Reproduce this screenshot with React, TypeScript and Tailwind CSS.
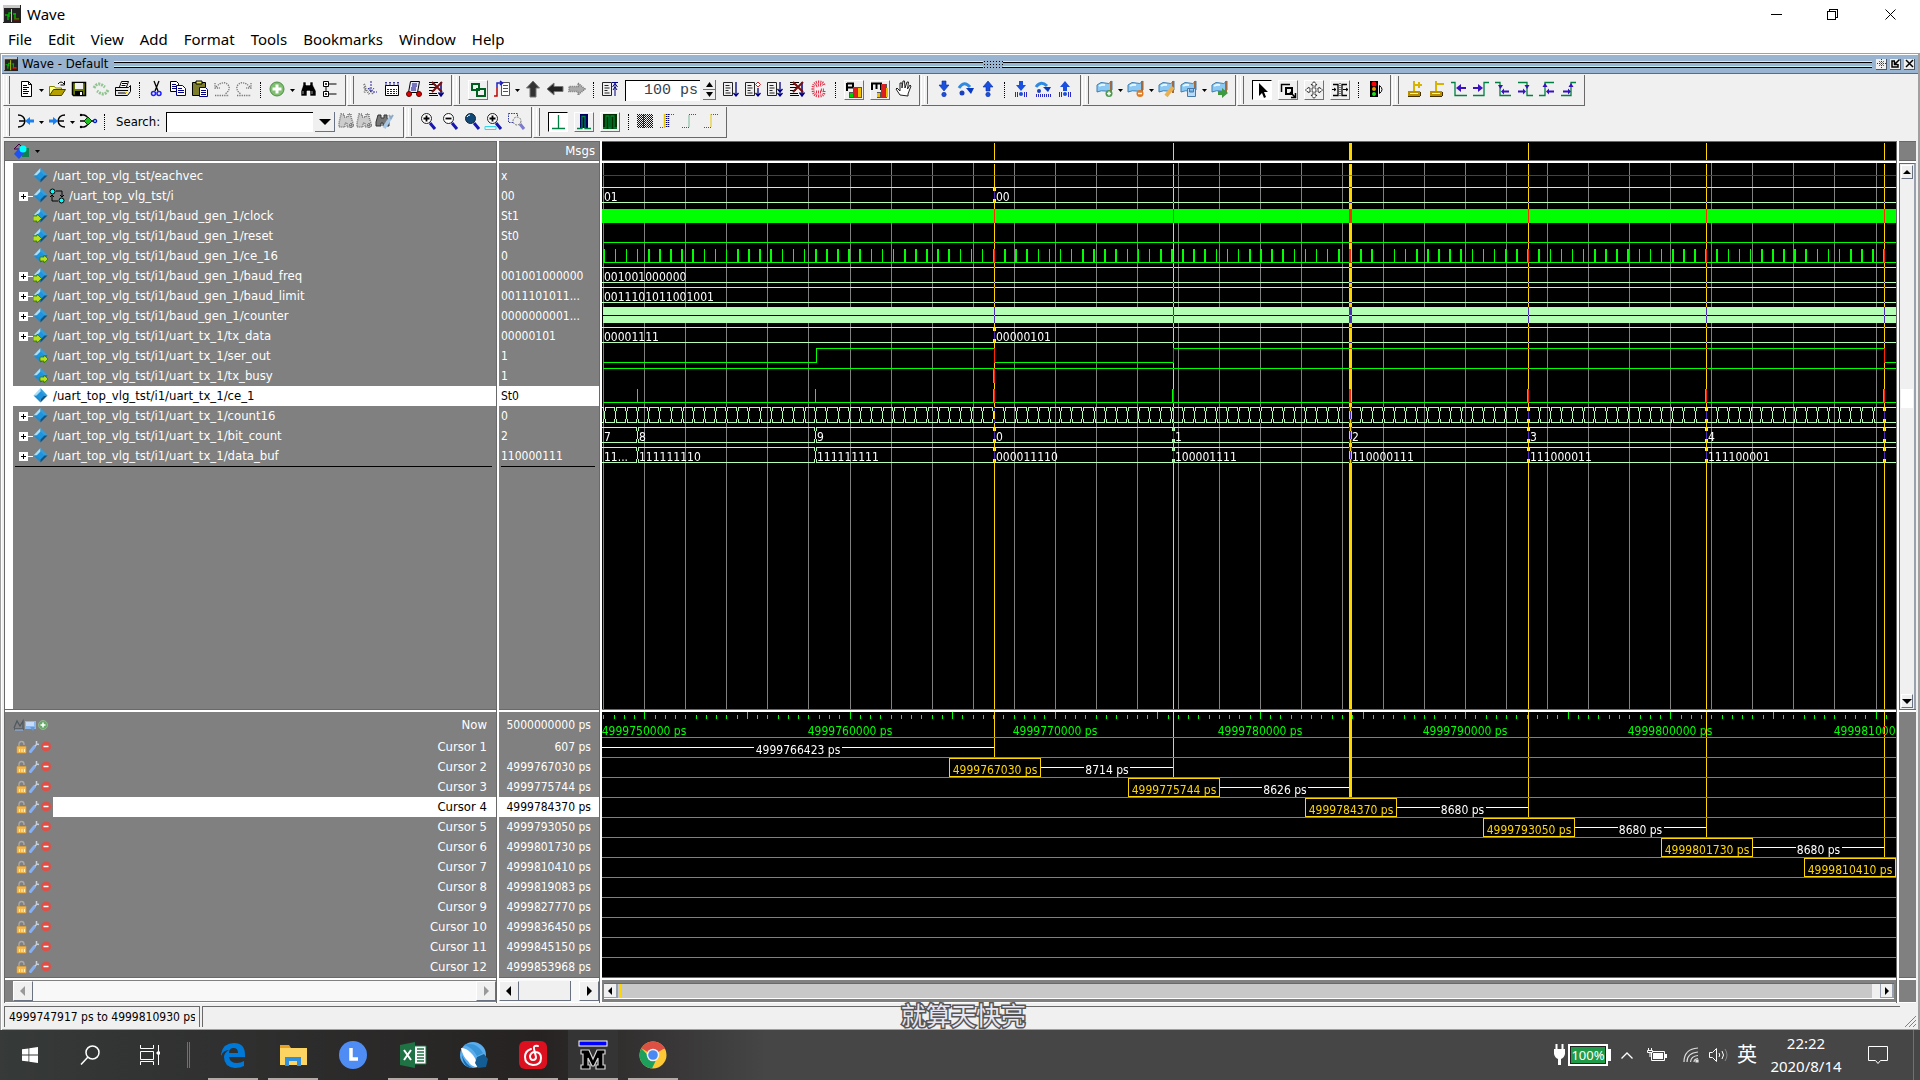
import type { ReactNode } from 'react';
import clsx from 'clsx';

type SignalKind = 'signal' | 'in' | 'out';

interface Signal {
    name: string;
    value: string;
    kind: SignalKind;
    expandable?: boolean;
    variable?: boolean;
    selected?: boolean;
}

interface Cursor {
    name: string;
    value: string;
    selected?: boolean;
}

const SIGNALS: Signal[] = [
    { name: '/uart_top_vlg_tst/eachvec', value: 'x', kind: 'signal' },
    { name: '/uart_top_vlg_tst/i', value: '00', kind: 'signal', expandable: true, variable: true },
    { name: '/uart_top_vlg_tst/i1/baud_gen_1/clock', value: 'St1', kind: 'in' },
    { name: '/uart_top_vlg_tst/i1/baud_gen_1/reset', value: 'St0', kind: 'in' },
    { name: '/uart_top_vlg_tst/i1/baud_gen_1/ce_16', value: '0', kind: 'out' },
    { name: '/uart_top_vlg_tst/i1/baud_gen_1/baud_freq', value: '001001000000', kind: 'in', expandable: true },
    { name: '/uart_top_vlg_tst/i1/baud_gen_1/baud_limit', value: '0011101011...', kind: 'in', expandable: true },
    { name: '/uart_top_vlg_tst/i1/baud_gen_1/counter', value: '0000000001...', kind: 'signal', expandable: true },
    { name: '/uart_top_vlg_tst/i1/uart_tx_1/tx_data', value: '00000101', kind: 'in', expandable: true },
    { name: '/uart_top_vlg_tst/i1/uart_tx_1/ser_out', value: '1', kind: 'out' },
    { name: '/uart_top_vlg_tst/i1/uart_tx_1/tx_busy', value: '1', kind: 'out' },
    { name: '/uart_top_vlg_tst/i1/uart_tx_1/ce_1', value: 'St0', kind: 'signal', selected: true },
    { name: '/uart_top_vlg_tst/i1/uart_tx_1/count16', value: '0', kind: 'signal', expandable: true },
    { name: '/uart_top_vlg_tst/i1/uart_tx_1/bit_count', value: '2', kind: 'signal', expandable: true },
    { name: '/uart_top_vlg_tst/i1/uart_tx_1/data_buf', value: '110000111', kind: 'signal', expandable: true },
];

const CURSORS: Cursor[] = [
    { name: 'Cursor 1', value: '607 ps' },
    { name: 'Cursor 2', value: '4999767030 ps' },
    { name: 'Cursor 3', value: '4999775744 ps' },
    { name: 'Cursor 4', value: '4999784370 ps', selected: true },
    { name: 'Cursor 5', value: '4999793050 ps' },
    { name: 'Cursor 6', value: '4999801730 ps' },
    { name: 'Cursor 7', value: '4999810410 ps' },
    { name: 'Cursor 8', value: '4999819083 ps' },
    { name: 'Cursor 9', value: '4999827770 ps' },
    { name: 'Cursor 10', value: '4999836450 ps' },
    { name: 'Cursor 11', value: '4999845150 ps' },
    { name: 'Cursor 12', value: '4999853968 ps' },
];

/* ---------- time axis ---------- */

const GREEN = '#00ff00';
const PALE = '#b3ffb3';
const GOLD = '#ffd700';

// Time is in ps after 4999750000.
const toX = (t: number) => Math.round(42.3 + t * 0.02052);

const MARKS = [
    { x: toX(17030), label: '4999767030 ps', next: '8714 ps' },
    { x: toX(25744), label: '4999775744 ps', next: '8626 ps' },
    { x: toX(34370), label: '4999784370 ps', next: '8680 ps' },
    { x: toX(43050), label: '4999793050 ps', next: '8680 ps' },
    { x: toX(51730), label: '4999801730 ps', next: '8680 ps' },
    { x: toX(60410), label: '4999810410 ps', next: '' },
];

const BIT_EDGES = [35, 213, ...MARKS.map((m) => m.x)];
const CE16 = Array.from({ length: 116 }, (_, i) => 1.8 + i * 11.13);

/* ---------- icons ---------- */

const ICONS: Record<string, ReactNode> = {
    file: (
        <>
            <path d="M5.500 2.500h7l3 3v12h-10z" fill="#fff" stroke="#000" />
            <path d="M12.500 2.500v3h3M7 6.500h4M7 8.500h6M7 10.500h4M7 12.500h6M7 14.500h5" fill="none" stroke="#000" />
        </>
    ),
    open: (
        <>
            <path d="M2.500 16.500v-9h5l1 1.500h6v2" fill="#ffff80" stroke="#808000" />
            <path d="M2.500 16.500l4-6h12l-4 6z" fill="#b5a000" stroke="#404000" />
            <path d="M11 5q3-4 6 0M17.500 2v4h-4" fill="none" stroke="#000" />
        </>
    ),
    save: (
        <>
            <path d="M3.500 3.500h13v13h-12l-1-1z" fill="#6b7a00" stroke="#000" strokeWidth="1.500" />
            <path d="M6 4h8v6H6z" fill="#f0f0f0" />
            <path d="M6 12h8v4H6z" fill="#000" />
            <path d="M11 13h2v3h-2z" fill="#fff" />
        </>
    ),
    refresh: (
        <g fill="none" stroke="#8fc48f" strokeWidth="3" strokeDasharray="2 1">
            <path d="M3 9q3-6 8-3l3 2M17 11q-3 6-8 3l-3-2" />
        </g>
    ),
    print: (
        <>
            <path d="M6.500 8l2-5.500h7l-2 5.500" fill="#fff" stroke="#000" />
            <path d="M2.500 8.500h13l2-2v6l-3 4h-12z" fill="#e8e8e8" stroke="#000" />
            <path d="M3 11.500h12M5 14h8M9 4.500h5M8.500 6.500h4" stroke="#000" fill="none" />
            <path d="M12 13h2v1h-2z" fill="#e0c000" />
        </>
    ),
    cut: (
        <>
            <path d="M8 2l4 10M13 2l-4 10" stroke="#000" strokeWidth="1.300" fill="none" />
            <circle cx="7.500" cy="14.500" r="2" fill="none" stroke="#2020ff" strokeWidth="1.500" />
            <circle cx="13" cy="14.500" r="2" fill="none" stroke="#2020ff" strokeWidth="1.500" />
        </>
    ),
    copy: (
        <>
            <path d="M2.500 2.500h6l2 2v8h-8z" fill="#fff" stroke="#000" />
            <path d="M8.500 6.500h6l3 3v7h-9z" fill="#fff" stroke="#000080" />
            <path d="M4 5.500h4M4 7.500h4M4 9.500h4M10 9.500h4M10 11.500h6M10 13.500h6" stroke="#000080" fill="none" />
        </>
    ),
    paste: (
        <>
            <path d="M2.500 3.500h13v13h-13z" fill="#7d7d2a" stroke="#000" />
            <path d="M6 2h6v3H6z" fill="#e0e060" stroke="#000" />
            <path d="M9.500 8.500h6l2 2v7h-8z" fill="#fff" stroke="#000080" />
            <path d="M11 11.500h5M11 13.500h5M11 15.500h5" stroke="#000080" fill="none" />
        </>
    ),
    undo: (
        <path
            d="M3 4v5h5M4 8q8-8 13-1q1 5-4 8M3 16.500h14"
            fill="none"
            stroke="#777"
            strokeWidth="1.300"
            strokeDasharray="1.300 1"
        />
    ),
    redo: (
        <path
            d="M17 4v5h-5M16 8q-8-8-13-1q-1 5 4 8M3 16.500h14"
            fill="none"
            stroke="#777"
            strokeWidth="1.300"
            strokeDasharray="1.300 1"
        />
    ),
    plus: (
        <>
            <circle cx="10" cy="10" r="7" fill="#7fbf6f" stroke="#4e8f48" />
            <path d="M10 5.500v9M5.500 10h9" stroke="#fff" strokeWidth="3" />
        </>
    ),
    find: (
        <path
            d="M5 3h3v3h4V3h3v3l3 6v5h-6v-5H9v5H3v-5l2-6zM5 12v3M14 12v3"
            fill="#000"
            stroke="#fff"
            strokeWidth=".6"
        />
    ),
    tree: (
        <g fill="#fff" stroke="#000">
            <path d="M3.500 2.500h5v5h-5zM3.500 12.500h5v5h-5z" />
            <path d="M6 7.500v5M8.500 5h8M8.500 15h8M5 5h2M5 15h2M6 4v2M6 14v2" />
        </g>
    ),
    step: (
        <>
            <path d="M4 5q3 5 0 9M4 8l6 8M9 9l4 6" stroke="#777" strokeWidth="2" strokeDasharray="1 1" fill="none" />
            <path d="M11 2v10M8 9l3 4 3-4M13 13h4" stroke="#22229a" fill="none" strokeDasharray="2 1" />
        </>
    ),
    calendar: (
        <>
            <path d="M3.500 6.500h13v10h-13z" fill="#fff" stroke="#000" />
            <path d="M4 3v5M8 3v5M12 3v5M16 3v5" stroke="#000080" strokeWidth="1.500" strokeDasharray="1.500 1" />
            <path d="M5 10.500h10M5 12.500h10M5 14.500h10" stroke="#222" strokeDasharray="2 1" />
        </>
    ),
    breakpoint: (
        <>
            <path d="M6.500 2.500h9l-2 11h-9z" fill="#e8e8ff" stroke="#000" />
            <path d="M8 5h5M8 7h5M7 9h5M7 11h5" stroke="#000080" />
            <circle cx="5" cy="15" r="2.500" fill="#e00000" stroke="#600" />
            <circle cx="15" cy="15" r="2.500" fill="#e00000" stroke="#600" />
        </>
    ),
    delete: (
        <>
            <path d="M3 3.500h9M3 5.500h7M3 8.500h8M3 11.500h6M3 14.500h8M3 16.500h9" stroke="#000" />
            <path d="M15 3v14M12.500 13.500L15 17l2.500-3.500" stroke="#000080" strokeWidth="1.500" fill="none" />
            <path d="M6 3l10 10M16 3L6 13" stroke="#7a1010" strokeWidth="2" />
        </>
    ),
    chain: (
        <g fill="none" stroke="#006020" strokeWidth="2">
            <path d="M4 4h7v6H4zM9 9h8v7H9z" />
        </g>
    ),
    trace: (
        <>
            <path d="M9.500 3.500h8v13h-8z" fill="#fff" stroke="#555" />
            <path d="M11 6.500h5M11 9.500h5M11 12.500h5" stroke="#555" />
            <path d="M5 9V4h5M8 2l2.500 2L8 6" fill="none" stroke="#2020c0" strokeWidth="1.500" />
            <path d="M5 9v8H2" fill="none" stroke="#c00000" strokeWidth="1.500" />
        </>
    ),
    up: <path d="M10 2l6.500 7H13v9H7V9H3.500z" fill="#333" stroke="#777" />,
    left: <path d="M2 10l7-6v3.500h9v5H9V16z" fill="#222" stroke="#777" />,
    right: (
        <path
            d="M18 10l-7-6v3.500H2v5h9V16z"
            fill="#aaa"
            stroke="#777"
            strokeWidth="1.500"
            strokeDasharray="1 1"
        />
    ),
    pageUp: (
        <>
            <path d="M2.500 3.500h9v13h-9zM4.500 6.500h4M4.500 9h5M4.500 11.500h3M4.500 14h5" fill="none" stroke="#222" />
            <path d="M15 17V3M12 3.500h6M12.500 8L15 4.500 17.500 8M13 11l2-3 2 3" fill="none" stroke="#000080" />
        </>
    ),
    run: (
        <>
            <path d="M2.500 3.500h9v13h-9zM4.500 6.500h4M4.500 9h5M4.500 11.500h3M4.500 14h5" fill="none" stroke="#222" />
            <path d="M15 3v14M12.500 14l2.500 3 2.500-3" fill="none" stroke="#000080" strokeWidth="1.300" />
        </>
    ),
    cont: (
        <>
            <path d="M2.500 3.500h9v13h-9zM4.500 6.500h4M4.500 9h5M4.500 11.500h3M4.500 14h5" fill="none" stroke="#222" />
            <path d="M15 9v8M12.500 14l2.500 3 2.500-3" fill="none" stroke="#000080" strokeWidth="1.300" />
            <path d="M15 3l2.500 2.500L15 8l-2.500-2.500z" fill="#fff" stroke="#d02020" />
        </>
    ),
    runAll: (
        <>
            <path d="M2.500 3.500h9v13h-9zM4.500 6.500h4M4.500 9h5M4.500 11.500h3M4.500 14h5" fill="none" stroke="#222" />
            <path d="M15 3v14M12.500 10l2.500 3 2.500-3M12.500 14l2.500 3 2.500-3" fill="none" stroke="#000080" strokeWidth="1.300" />
        </>
    ),
    stop: (
        <g fill="none" stroke="#e03048" strokeWidth="3" strokeDasharray="1 1">
            <path d="M15 6q-1-3-5-3-6 0-6 7t6 7q5 0 5-4v-2h-4" />
            <path d="M7 7q4-2 6 0M7 13h6" />
        </g>
    ),
    profile: (
        <>
            <path d="M3 3v8M3 3.500h6v4H3" stroke="#000" strokeWidth="2" fill="none" />
            <path d="M9 7h9v11H5v-6h4z" fill="#555" />
            <path d="M6 13h3v4H6z" fill="#00d000" />
            <path d="M10 8h3v9h-3z" fill="#e02020" />
            <path d="M14 8h3v9h-3z" fill="#f0c000" />
        </>
    ),
    memory: (
        <>
            <path d="M2 10V3.500h9V10M6.500 3v6" stroke="#000" strokeWidth="2" fill="none" />
            <path d="M11 4h6v14H7v-6h4z" fill="#555" />
            <path d="M7 13h3v4H7z" fill="#f0c000" />
            <path d="M12 4h3v13h-3z" fill="#e02020" />
            <path d="M16 8h2v9h-2z" fill="#f0c000" />
        </>
    ),
    hand: (
        <path
            d="M6 16l-4-6 1-1 3 3V4h2v5l1-7h1.500l.5 7 2-6h1.500l-1 7 2.500-4 1 1-3 8v2z"
            fill="#fff"
            stroke="#222"
        />
    ),
    into: (
        <g fill="#1a50e0" stroke="#0a2ea0" strokeWidth=".6">
            <path d="M8 2h4v4h3l-5 6-5-6h3z" />
            <circle cx="10" cy="15.500" r="2.200" />
        </g>
    ),
    over: (
        <>
            <path d="M3 9q5-8 11-1" fill="none" stroke="#2f8ae0" strokeWidth="3" />
            <path d="M10 9h8l-3 6z" fill="#0a3ac0" />
            <circle cx="6" cy="14" r="2.500" fill="#1a40c0" />
        </>
    ),
    out: (
        <g fill="#1a50e0" stroke="#0a2ea0" strokeWidth=".6">
            <path d="M8 12h4V8h3l-5-6-5 6h3z" />
            <circle cx="10" cy="15.500" r="2.200" />
        </g>
    ),
    intoC: (
        <g fill="#1a50e0">
            <path d="M8 2h4v4h3l-5 6-5-6h3z" />
            <circle cx="10" cy="15" r="2" />
            <path d="M4.500 13v5M6.500 13v5M13.500 13v5M15.500 13v5" stroke="#2a2ac0" />
        </g>
    ),
    overC: (
        <>
            <path d="M3 8q5-7 11-1" fill="none" stroke="#2f8ae0" strokeWidth="3" />
            <path d="M10 8h8l-3 5z" fill="#0a3ac0" />
            <circle cx="6" cy="12" r="2" fill="#1a40c0" />
            <path d="M3 16.500h15" stroke="#2a2ac0" strokeWidth="3" strokeDasharray="1 1" />
        </>
    ),
    outC: (
        <g fill="#1a50e0">
            <path d="M8 12h4V8h3l-5-6-5 6h3z" />
            <circle cx="10" cy="15" r="2" />
            <path d="M4.500 13v5M6.500 13v5M13.500 13v5M15.500 13v5" stroke="#2a2ac0" />
        </g>
    ),
    pointer: <path d="M7 3v13l3-3 2 5 2-1-2-5h4z" fill="#000" />,
    zoomMode: (
        <g fill="none" stroke="#000">
            <path d="M3.500 12V4.500H12" strokeWidth="1.500" />
            <path d="M8 8h6v6H8z" strokeWidth="2" />
            <path d="M12 12l5 5M17.500 13v4.500H13" strokeWidth="1.500" />
        </g>
    ),
    pan: (
        <path
            d="M10 1.500l3 3.500h-2v4h4V7l3.500 3-3.500 3v-2h-4v4h2l-3 3.500L7 15h2v-4H5v2l-3.500-3L5 7v2h4V5H7z"
            fill="#fff"
            stroke="#222"
            strokeDasharray="2 .5"
        />
    ),
    edit: (
        <g fill="none" stroke="#000">
            <path d="M3 4.500h5v11H3M17 4.500h-5v11h5" strokeWidth="1.300" />
            <path d="M10 3v14" strokeDasharray="1 1" />
            <path d="M2 9.500h4M4 8l2 1.500L4 11M13 9.500h5M16 8l2 1.500-2 1.500" />
        </g>
    ),
    traffic: (
        <>
            <path d="M5 2h8v16H5z" fill="#000" />
            <circle cx="9" cy="5" r="2.500" fill="#ff0000" />
            <circle cx="9" cy="10" r="2" fill="#e0a000" />
            <circle cx="9" cy="15" r="2" fill="#20e020" />
            <path d="M14.500 6.500v8q5-4 0-8z" fill="#fff" stroke="#000" />
        </>
    ),
    cursorAdd: (
        <g fill="none" strokeWidth="2">
            <path d="M9 2v11M10 6h7M14 3v6" stroke="#d8b400" />
            <path d="M4 13h10v3H4z" stroke="#b89000" />
            <path d="M3 17.500h12M15.500 13v4" stroke="#403000" strokeWidth="1" />
        </g>
    ),
    cursorDel: (
        <g fill="none" strokeWidth="2">
            <path d="M9 2v11M10 5h7" stroke="#d8b400" />
            <path d="M4 13h10v3H4z" stroke="#b89000" />
            <path d="M3 17.500h12M15.500 13v4" stroke="#403000" strokeWidth="1" />
        </g>
    ),
    prevEdge: (
        <>
            <path d="M2 3.500h4v13h12" fill="none" stroke="#008040" strokeWidth="1.300" />
            <path d="M7 9l5-4v3h5v2h-5v3z" fill="#3a10c0" />
        </>
    ),
    nextEdge: (
        <>
            <path d="M2 16.500h11v-13h5" fill="none" stroke="#008040" strokeWidth="1.300" />
            <path d="M12 9L7 5v3H2v2h5v3z" fill="#3a10c0" />
        </>
    ),
    fallPrev: (
        <>
            <path d="M2 3.500h5v13h11" fill="none" stroke="#008040" strokeWidth="1.300" />
            <path d="M8 12.500l3-3v2h5v2h-5v2zM5 6h5l-2.500 4z" fill="#3a10c0" />
        </>
    ),
    fallNext: (
        <>
            <path d="M3 3.500h9v13h6" fill="none" stroke="#008040" strokeWidth="1.300" />
            <path d="M11 12.500l-3-3v2H3v2h5v2zM9.500 6h5L12 10z" fill="#3a10c0" />
        </>
    ),
    risePrev: (
        <>
            <path d="M2 16.500h6v-13h9" fill="none" stroke="#008040" strokeWidth="1.300" />
            <path d="M9 12.500l3-3v2h5v2h-5v2zM5.500 8h5L8 4z" fill="#3a10c0" />
        </>
    ),
    riseNext: (
        <>
            <path d="M2 16.500h10v-13h5" fill="none" stroke="#008040" strokeWidth="1.300" />
            <path d="M12 12.500l-3-3v2H4v2h5v2zM9.500 8h5L12 4z" fill="#3a10c0" />
        </>
    ),
    mergeLeft: (
        <>
            <path d="M2 4q6 0 7 6-1 6-7 6M3 10h6" fill="none" stroke="#000" strokeWidth="1.500" />
            <path d="M9 10l5-4v2.500h4v3h-4V14z" fill="#1a80f0" />
        </>
    ),
    mergeRight: (
        <>
            <path d="M18 4q-6 0-7 6 1 6 7 6M17 10h-6" fill="none" stroke="#000" strokeWidth="1.500" />
            <path d="M11 10L6 6v2.500H2v3h4V14z" fill="#1a80f0" />
        </>
    ),
    mergeAll: (
        <>
            <path d="M2 4h4q4 1 5 6-1 5-5 6H2M2 10h14" fill="none" stroke="#000" strokeWidth="1.300" />
            <path d="M10 6l4 4-4 4-4-4z" fill="#20c020" stroke="#004000" />
            <circle cx="17" cy="10" r="1.800" fill="#60b0ff" stroke="#00a" />
            <circle cx="3" cy="4" r="1.200" />
            <circle cx="3" cy="16" r="1.200" />
        </>
    ),
    findGrey: (
        <>
            <path
                d="M5 3h3v3h4V3h3v3l2 6v4h-6v-4H9v4H3v-4z"
                fill="#ccc"
                stroke="#777"
                strokeWidth="1.500"
                strokeDasharray="1 1"
            />
            <path d="M13 14h5M15 12v6" stroke="#6a7ae0" strokeWidth="2" strokeDasharray="1 1" />
        </>
    ),
    findTool: (
        <>
            <path d="M4 4h3v3h3V4h3v3l2 4v4H9v-3H7v3H2v-4z" fill="#777" stroke="#333" />
            <path d="M17 6l-7 11" stroke="#a8c8e8" strokeWidth="3.500" />
            <path d="M15 4l2 3 2-3" stroke="#90a8c0" strokeWidth="2" fill="none" />
        </>
    ),
};

const flagBadge = (badge: ReactNode) => (
    <>
        <path d="M2 6q4-4 8-2t7-2v9q-4 2-7 1t-8 1z" fill="#8cc8f4" stroke="#3f7fb0" />
        <path d="M4 7q3-2 6-1" stroke="#e8f8ff" strokeWidth="2" fill="none" />
        <path d="M16 2v12" stroke="#a06a40" strokeWidth="2" />
        {badge}
    </>
);

ICONS.flagAdd = flagBadge(
    <>
        <circle cx="14" cy="14.500" r="3.500" fill="#4f9a4f" />
        <path d="M14 12.500v4M12 14.500h4" stroke="#fff" strokeWidth="1.500" />
    </>
);
ICONS.flagDel = flagBadge(
    <>
        <circle cx="14" cy="14.500" r="3.500" fill="#e07a20" />
        <path d="M12 14.500h4" stroke="#fff" strokeWidth="1.500" />
    </>
);
ICONS.flagEdit = flagBadge(<path d="M16 8l-7 9" stroke="#e8b050" strokeWidth="4" />);
ICONS.flagSave = flagBadge(<path d="M8.500 9.500h8v8h-8zM10.500 10v3h4v-3" fill="#b8dcf8" stroke="#4a78a8" />);
ICONS.flagGo = flagBadge(<path d="M8 12h4V9l6 5-6 5v-3H8z" fill="#3f9a3f" />);

const lens = (fill: string, inner: ReactNode) => (
    <>
        <path d="M12 12l5 6" stroke="#1818b0" strokeWidth="3" />
        <circle cx="8.500" cy="7.500" r="5" fill={fill} stroke="#222" />
        {inner}
    </>
);

ICONS.zoomIn = lens('#fff', <path d="M8.500 4.500v6M5.500 7.500h6" stroke="#000" strokeWidth="1.800" />);
ICONS.zoomOut = lens('#fff', <path d="M5.500 7.500h6" stroke="#000" strokeWidth="1.800" />);
ICONS.zoomFull = lens('#104878', <path d="M5 6q1-2 3-2" stroke="#fff" fill="none" />);
ICONS.zoomCursor = lens(
    '#fff',
    <>
        <path d="M8.500 4.500v6M5.500 7.500h6" stroke="#000" strokeWidth="1.800" />
        <path d="M1 15.500h11v3H1z" fill="none" stroke="#30d8f0" />
    </>
);
ICONS.zoomRange = (
    <>
        <path d="M2.500 2.500h9v9h-9z" fill="none" stroke="#333a9a" strokeDasharray="1.500 1" />
        <circle cx="11" cy="10" r="4" fill="#eee" stroke="#777" strokeDasharray="2 1" />
        <path d="M14 13l4 5" stroke="#7a7ad0" strokeWidth="3" />
    </>
);
ICONS.shapeLine = <path d="M10.500 3v13M4 16.500h13" stroke="#008040" strokeWidth="1.300" />;
ICONS.shapePulse = (
    <>
        <path d="M6 2h8v14H6z" fill="#000060" />
        <path d="M3 16.500h5v-12h3v12h6" fill="none" stroke="#008040" strokeWidth="1.300" />
    </>
);
ICONS.shapeBlock = (
    <>
        <path d="M3 2h14v15H3z" fill="#003000" />
        <path d="M3 16h3V4h3v12h2V4h3v12h3" fill="none" stroke="#008030" strokeWidth="1.300" />
    </>
);
ICONS.hatch = (
    <>
        <path d="M2 3.500h16M2 5.500h16M2 7.500h16M2 9.500h16M2 11.500h16M2 13.500h16M2 15.500h16" stroke="#000070" strokeDasharray="1 1" />
        <path d="M3 4.500h15M3 6.500h15M3 8.500h15M3 10.500h15M3 12.500h15M3 14.500h15M3 16.500h15" stroke="#000070" strokeDasharray="1 1" />
        <path d="M8.500 17V4h3v13" stroke="#008040" fill="none" strokeDasharray="1 1" />
    </>
);
ICONS.edgeHatch = (
    <>
        <path d="M9.500 3v14M11.500 3v14" stroke="#000070" strokeWidth="1.500" strokeDasharray="1 1" />
        <path d="M7.500 3v14" stroke="#e8c800" strokeWidth="1.500" />
        <path d="M3 16.500h4M12 3.500h5" stroke="#008040" strokeDasharray="1 1" />
    </>
);
ICONS.edgeGreen = <path d="M3 16.500h7v-13h7" fill="none" stroke="#008040" strokeDasharray="1 1" />;
ICONS.edgeGold = (
    <>
        <path d="M3 16.500h7M10 3.500h7" fill="none" stroke="#008040" strokeDasharray="1 1" />
        <path d="M10 3v13" stroke="#e8c800" />
    </>
);

function WaveLogo() {
    return (
        <svg viewBox="0 0 18 18" className="size-full" aria-hidden="true">
            <rect width="18" height="18" fill="#222" />
            <path d="M0 0h17v3H1v14H0z" fill="#c8c8c8" />
            <path d="M2 10h3v5M6 12V8h3M10 9h3M12 8v6h4" fill="none" stroke="#00b000" strokeWidth="1.500" />
            <path d="M8.500 4v13" stroke="#d8e000" />
            <path d="M11 14.500h5" stroke="#e00000" strokeWidth="1.500" />
        </svg>
    );
}

/* ---------- toolbars ---------- */

function Tool({ name, look = 'flat' }: { name: string; look?: 'flat' | 'tight' | 'raised' | 'pressed' }) {
    return (
        <button
            type="button"
            aria-label={name}
            className={clsx(
                'flex shrink-0 items-center justify-center',
                look === 'flat' && 'mb-0.5 h-[22px] w-[22px]',
                look === 'tight' && 'mb-0.5 h-[22px] w-[18px]',
                look === 'raised' && 'mx-[3px] h-5 w-5 border border-t-white border-r-gray-500 border-b-gray-500 border-l-white',
                look === 'pressed' && 'mx-[3px] h-5 w-5 border border-t-black border-r-white border-b-white border-l-black bg-white'
            )}
        >
            <svg viewBox="0 0 20 20" className="size-5 shrink-0" aria-hidden="true">
                {ICONS[name]}
            </svg>
        </button>
    );
}

function Drop() {
    return (
        <button type="button" aria-label="More" className="flex w-[9px] shrink-0 justify-center">
            <svg viewBox="0 0 5 3" className="h-[3px] w-[5px]" aria-hidden="true">
                <path d="M0 0h5L2.500 3z" />
            </svg>
        </button>
    );
}

function Sep() {
    return <span className="mx-[5px] h-4 w-px shrink-0 border-l border-dotted border-black" />;
}

function Group({ children }: { children: ReactNode }) {
    return (
        <div className="mr-px flex h-[31px] shrink-0 items-center border-r border-b border-l border-l-white border-r-[#696969] border-b-[#696969] pr-1">
            <span className="mr-[5px] ml-0.5 h-7 w-1 border-r border-l border-l-white border-r-[#696969]" />
            {children}
        </div>
    );
}

function Toolbars() {
    return (
        <div className="border-t border-[#696969] pt-px pl-px">
            <div className="flex">
                <Group>
                    <Tool name="file" />
                    <Drop />
                    <Tool name="open" />
                    <Tool name="save" />
                    <Tool name="refresh" />
                    <Tool name="print" />
                    <Sep />
                    <Tool name="cut" />
                    <Tool name="copy" />
                    <Tool name="paste" />
                    <Tool name="undo" />
                    <Tool name="redo" />
                    <Sep />
                    <Tool name="plus" />
                    <Drop />
                    <Tool name="find" />
                    <Tool name="tree" />
                </Group>
                <Group>
                    <Tool name="step" />
                    <Tool name="calendar" />
                    <Tool name="breakpoint" />
                    <Tool name="delete" />
                </Group>
                <Group>
                    <Tool name="chain" look="raised" />
                    <Tool name="trace" />
                    <Drop />
                    <Tool name="up" />
                    <Tool name="left" />
                    <Tool name="right" />
                    <Sep />
                    <Tool name="pageUp" />
                    <input
                        aria-label="Run length"
                        defaultValue="100 ps"
                        className="ml-1 h-[21px] w-[75px] border-t border-l border-black bg-white pr-0.5 text-right font-['Liberation_Mono',monospace] text-[15px] leading-5 text-gray-700"
                    />
                    <div className="mr-1 ml-[3px] flex flex-col">
                        <button type="button" aria-label="Increase" className="flex h-2.5 w-[13px] items-center justify-center border-r border-b border-gray-500">
                            <svg viewBox="0 0 7 5" className="h-[5px] w-[7px]"><path d="M3.500 0L7 5H0z" /></svg>
                        </button>
                        <button type="button" aria-label="Decrease" className="flex h-2.5 w-[13px] items-center justify-center border-r border-b border-gray-500">
                            <svg viewBox="0 0 7 5" className="h-[5px] w-[7px]"><path d="M3.500 5L7 0H0z" /></svg>
                        </button>
                    </div>
                    <Tool name="run" />
                    <Tool name="cont" />
                    <Tool name="runAll" />
                    <Tool name="delete" />
                    <Tool name="stop" />
                    <Sep />
                    <Tool name="profile" look="raised" />
                    <Tool name="memory" look="raised" />
                    <Tool name="hand" />
                </Group>
                <Group>
                    <Tool name="into" />
                    <Tool name="over" />
                    <Tool name="out" />
                    <Sep />
                    <Tool name="intoC" />
                    <Tool name="overC" />
                    <Tool name="outC" />
                </Group>
                <Group>
                    <Tool name="flagAdd" />
                    <Drop />
                    <Tool name="flagDel" />
                    <Drop />
                    <Tool name="flagEdit" />
                    <Tool name="flagSave" />
                    <Drop />
                    <Tool name="flagGo" />
                </Group>
                <Group>
                    <Tool name="pointer" look="pressed" />
                    <Tool name="zoomMode" look="raised" />
                    <Tool name="pan" look="raised" />
                    <Tool name="edit" look="raised" />
                    <Sep />
                    <Tool name="traffic" />
                </Group>
                <Group>
                    <Tool name="cursorAdd" />
                    <Tool name="cursorDel" />
                    <Tool name="prevEdge" />
                    <Tool name="nextEdge" />
                    <Tool name="fallPrev" />
                    <Tool name="fallNext" />
                    <Tool name="risePrev" />
                    <Tool name="riseNext" />
                </Group>
            </div>
            <div className="mt-px flex">
                <Group>
                    <Tool name="mergeLeft" />
                    <Drop />
                    <Tool name="mergeRight" />
                    <Drop />
                    <Tool name="mergeAll" />
                    <Sep />
                    <label htmlFor="search" className="mx-1.5 text-[13px]">
                        Search:
                    </label>
                    <input id="search" className="h-5 w-[147px] border-t border-l border-black bg-white px-1 text-xs" />
                    <button
                        type="button"
                        aria-label="Search history"
                        className="mx-0.5 flex h-5 w-5 items-center justify-center border-r border-b border-gray-500"
                    >
                        <svg viewBox="0 0 12 6" className="h-1.5 w-3"><path d="M0 0h12L6 6z" /></svg>
                    </button>
                    <Tool name="findGrey" look="tight" />
                    <Tool name="findGrey" look="tight" />
                    <Tool name="findTool" />
                    <span className="w-1" />
                </Group>
                <Group>
                    <Tool name="zoomIn" />
                    <Tool name="zoomOut" />
                    <Tool name="zoomFull" />
                    <Tool name="zoomCursor" />
                    <Tool name="zoomRange" />
                </Group>
                <Group>
                    <Tool name="shapeLine" look="pressed" />
                    <Tool name="shapePulse" look="raised" />
                    <Tool name="shapeBlock" look="raised" />
                    <Sep />
                    <Tool name="hatch" />
                    <Tool name="edgeHatch" />
                    <Tool name="edgeGreen" />
                    <Tool name="edgeGold" />
                </Group>
            </div>
        </div>
    );
}

/* ---------- signal list ---------- */

function SignalIcon({ kind }: { kind: SignalKind }) {
    return (
        <svg viewBox="0 0 16 16" className="size-4 shrink-0" aria-hidden="true">
            <path d="M7.500 0L.5 7.500h7z" fill="#a8e0fa" />
            <path d="M7.500 0l7 7.500h-7z" fill="#2f9fe0" />
            <path d="M.5 7.500l7 7v-7z" fill="#1f8cd0" />
            <path d="M14.500 7.500l-7 7v-7z" fill="#0a5488" />
            <path d="M7.500 3.500l4 4-4 4-4-4z" fill="#1f94dc" />
            {kind === 'in' && <path d="M0 8h4V6l4.500 4.500L4 15v-2H0z" fill="#b8e020" stroke="#2c7a10" strokeWidth=".8" />}
            {kind === 'out' && <path d="M7 9h4V7l4 4-4 4v-2H7z" fill="#b8e020" stroke="#2c7a10" strokeWidth=".8" />}
        </svg>
    );
}

function SignalRow({ signal }: { signal: Signal }) {
    return (
        <li
            className={clsx(
                'flex h-5 items-center text-[13px]',
                signal.selected ? 'bg-white text-black' : 'text-white'
            )}
        >
            <span className="flex h-5 w-5 shrink-0 items-center justify-end">
                {signal.expandable && (
                    <button type="button" aria-label="Expand" className="flex items-center">
                        <svg viewBox="0 0 14 9" className="h-[9px] w-3.5" shapeRendering="crispEdges">
                            <path d="M0 0h9v9H0z" fill="#fff" />
                            <path d="M9 4.500h5" stroke="#fff" />
                            <path d="M2 4.500h5M4.500 2v5" stroke="#000" />
                        </svg>
                    </button>
                )}
            </span>
            <SignalIcon kind={signal.kind} />
            {signal.variable && (
                <svg viewBox="0 0 16 16" className="size-4 shrink-0" aria-hidden="true">
                    <path d="M7 3h6v6M9 13H3V8M11 7l2 2 2-2M1 9l2-2 2 2" fill="none" stroke="#000" />
                    <circle cx="3.500" cy="3.500" r="2.500" fill="#00ffff" stroke="#000" />
                    <circle cx="12.500" cy="12.500" r="2.500" fill="#00ffff" stroke="#000" />
                </svg>
            )}
            <span className="ml-1">{signal.name}</span>
        </li>
    );
}

function PaneDivider() {
    return <div className="h-[3px] shrink-0 border-t border-[#696969] bg-white" />;
}

function HeaderCell({ children, black }: { children?: ReactNode; black?: boolean }) {
    return (
        <div
            className={clsx(
                'flex h-5 shrink-0 items-center border-y border-[#696969]',
                black ? 'bg-black' : 'bg-[#808080]'
            )}
        >
            {children}
        </div>
    );
}

function CursorIcons() {
    return (
        <span className="flex w-10 shrink-0 items-center pl-[3px]">
            <svg viewBox="0 0 12 14" className="h-3.5 w-3" aria-hidden="true">
                <path d="M3 7V4q0-2.500 2.500-2.500T8 4v1" fill="none" stroke="#aaa" strokeWidth="1.300" />
                <path d="M1 6.500h9V13H1z" fill="#f4b850" stroke="#e0a030" strokeWidth=".6" />
                <path d="M3 9h1v3H3zM5.500 9h1v3h-1zM8 9h1v3H8z" fill="#fff0c0" />
            </svg>
            <svg viewBox="0 0 12 14" className="h-3.5 w-3" aria-hidden="true">
                <path d="M2.500 11.500l4-5" stroke="#88b0f0" strokeWidth="3" strokeLinecap="round" />
                <path d="M7 6l2-2M8.500 1L8.500 4 11 4.500" stroke="#c8d0d8" strokeWidth="1.500" fill="none" />
            </svg>
            <svg viewBox="0 0 12 12" className="size-3" aria-hidden="true">
                <circle cx="6" cy="5.500" r="5" fill="#dc5048" />
                <path d="M3.500 5.500h5" stroke="#fff" strokeWidth="1.500" />
            </svg>
        </span>
    );
}

function ScrollButton({ dir, muted }: { dir: 'left' | 'right' | 'up' | 'down'; muted?: boolean }) {
    const shape = { left: 'M7 0v10L2 5z', right: 'M3 0v10l5-5z', up: 'M1 7h8L5 3z', down: 'M0 3h10L5 8z' }[dir];
    return (
        <button
            type="button"
            aria-label={'Scroll ' + dir}
            className={clsx(
                'flex shrink-0 items-center justify-center border border-t-white border-r-gray-500 border-b-gray-500 border-l-white bg-[#f0f0f0]',
                dir === 'left' || dir === 'right' ? 'h-full w-5' : 'h-3.5 w-full'
            )}
        >
            <svg viewBox="0 0 10 10" className="size-2.5 shrink-0" aria-hidden="true">
                <path d={shape} fill={muted ? '#999' : '#000'} />
            </svg>
        </button>
    );
}

function NamesColumn() {
    return (
        <section className="flex w-[493px] shrink-0 flex-col border-r border-l border-[#696969]">
            <HeaderCell>
                <button type="button" aria-label="Objects" className="ml-2 flex items-center">
                    <svg viewBox="0 0 16 16" className="size-4" aria-hidden="true">
                        <path d="M1 6l5-5 5 5z" fill="#808080" stroke="#400040" />
                        <path d="M9 5h7v9H9z" fill="#108050" />
                        <path d="M6 5l5 5-5 6-5-5z" fill="#2050f0" />
                        <circle cx="10" cy="6" r="3.500" fill="#00ffff" />
                    </svg>
                    <span className="w-1" />
                    <Drop />
                </button>
            </HeaderCell>
            <div className="h-0.5 shrink-0 bg-white" />
            <div className="flex min-h-0 flex-1 flex-col border-l-8 border-white bg-[#808080] pt-[3px]">
                <ul>
                    {SIGNALS.map((s) => (
                        <SignalRow key={s.name} signal={s} />
                    ))}
                </ul>
                <div className="mr-1 ml-0.5 h-px bg-black" />
            </div>
            <PaneDivider />
            <div className="h-[265px] shrink-0 overflow-hidden bg-[#808080] text-[13px] text-white">
                <div className="flex h-[25px] items-center justify-between pr-[9px] pl-2">
                    <svg viewBox="0 0 36 14" className="h-3.5 w-9" aria-hidden="true">
                        <path d="M1 10l3-7 3 5 3-5v7M1 11h10" fill="none" stroke="#505860" strokeWidth="1.300" />
                        <path d="M2 12h8" stroke="#8cb8f0" />
                        <path d="M12 3h11v8H12z" fill="#8cb8f0" />
                        <path d="M13 5h8M13 7h8" stroke="#fff" />
                        <path d="M17 9h5l-2 4z" fill="#6a98d0" />
                        <circle cx="30" cy="7" r="4.500" fill="#68a868" stroke="#90b890" />
                        <path d="M30 4.500v5M27.500 7h5" stroke="#fff" strokeWidth="1.500" />
                    </svg>
                    <span>Now</span>
                </div>
                <ul>
                    {CURSORS.map((c) => (
                        <li key={c.name} className="flex h-5 items-center pl-2">
                            <CursorIcons />
                            <span
                                className={clsx(
                                    'flex h-full flex-1 items-center justify-end pr-[9px]',
                                    c.selected && 'bg-white text-black'
                                )}
                            >
                                {c.name}
                            </span>
                        </li>
                    ))}
                </ul>
            </div>
            <PaneDivider />
            <div className="flex h-[23px] shrink-0 border-b border-white bg-[#808080] py-px pl-2">
                <ScrollButton dir="left" muted />
                <div className="flex-1 bg-[#f8f8f8]" />
                <ScrollButton dir="right" muted />
            </div>
        </section>
    );
}

function ValuesColumn() {
    return (
        <section className="flex w-[103px] shrink-0 flex-col border-r border-l-2 border-r-[#696969] border-l-white">
            <HeaderCell>
                <span className="flex-1 pr-1 text-right text-[13px] text-white">Msgs</span>
            </HeaderCell>
            <div className="h-0.5 shrink-0 bg-white" />
            <div className="min-h-0 flex-1 bg-[#808080] pt-[3px]">
                <ul>
                    {SIGNALS.map((s) => (
                        <li
                            key={s.name}
                            className={clsx(
                                'flex h-5 items-center pl-0.5',
                                s.selected ? 'bg-white text-black' : 'text-white'
                            )}
                        >
                            {s.value}
                        </li>
                    ))}
                </ul>
                <div className="mr-1 ml-0.5 h-px bg-black" />
            </div>
            <PaneDivider />
            <div className="h-[265px] shrink-0 overflow-hidden bg-[#808080] text-white">
                <div className="flex h-[25px] items-center justify-end pr-2">5000000000 ps</div>
                <ul>
                    {CURSORS.map((c) => (
                        <li
                            key={c.name}
                            className={clsx(
                                'flex h-5 items-center justify-end pr-2 whitespace-nowrap',
                                c.selected && 'bg-white text-black'
                            )}
                        >
                            {c.value}
                        </li>
                    ))}
                </ul>
            </div>
            <PaneDivider />
            <div className="flex h-[23px] shrink-0 border-b border-white bg-[#f8f8f8] py-px">
                <ScrollButton dir="left" />
                <div className="w-[52px] border-r border-b border-gray-500 bg-[#f0f0f0]" />
                <div className="flex-1" />
                <ScrollButton dir="right" />
            </div>
        </section>
    );
}

/* ---------- waveforms ---------- */

interface BusProps {
    row: number;
    edges?: number[];
    labels?: { x: number; text: string }[];
}

const rowTop = (row: number) => 3 + row * 20;

function Bus({ row, edges = [], labels = [] }: BusProps) {
    const top = rowTop(row) + 1;
    return (
        <g>
            <rect y={top} width="100%" height="1" fill={PALE} />
            <rect y={top + 15} width="100%" height="1" fill={PALE} />
            {edges.map((e) => {
                const x = Math.round(e);
                return (
                    <g key={x}>
                        <rect x={x} y={top} width="1" height="16" fill="#000" />
                        <path
                            d={`M${x - 0.5} ${top}v4M${x + 1.5} ${top}v4M${x + 0.5} ${top + 4}v8M${x - 0.5} ${top + 12}v4M${x + 1.5} ${top + 12}v4`}
                            stroke={PALE}
                        />
                    </g>
                );
            })}
            {labels.map((l) => (
                <text key={l.x} x={l.x} y={top + 14} fill="#fff">
                    {l.text}
                </text>
            ))}
        </g>
    );
}

function Waveforms() {
    const grid = Array.from({ length: 32 }, (_, i) => toX((i - 1) * 2000));
    const at = (row: number, offset: number) => rowTop(row) + offset;
    const high = at(9, 2) + 0.5;
    const low = at(9, 16) + 0.5;
    const serOut = [
        `M1 ${low}H214.500V${high}`,
        `H${MARKS[0].x + 0.5}V${low}`,
        `H${MARKS[1].x + 0.5}V${high}`,
        `H${MARKS[5].x + 0.5}V${low}H3000`,
    ].join('');

    return (
        <svg className="isolate block h-full w-full" shapeRendering="crispEdges" role="img" aria-label="Waveforms">
            <rect width="100%" height="100%" fill="#000" />
            {grid.map((x) => (
                <rect key={x} x={x} width="1" height="100%" fill="#808080" />
            ))}
            <rect x="1" y={at(0, 9)} width="100%" height="1" fill="#e00000" />
            <Bus row={1} edges={[MARKS[0].x]} labels={[{ x: 2, text: '01' }, { x: MARKS[0].x + 2, text: '00' }]} />
            <rect y={at(2, 3)} width="100%" height="14" fill={GREEN} />
            <rect x="1" y={at(3, 16)} width="100%" height="1" fill={GREEN} />

            <rect x="1" y={at(4, 16)} width="100%" height="1" fill={GREEN} />
            {CE16.map((x) => {
                const wide = x % 1 > 0.27 && x % 1 < 0.85;
                return (
                    <rect
                        key={x}
                        x={wide ? Math.floor(x) : Math.round(x)}
                        y={at(4, 3)}
                        width={wide ? 2 : 1}
                        height="14"
                        fill={GREEN}
                    />
                );
            })}

            <Bus row={5} labels={[{ x: 2, text: '001001000000' }]} />
            <Bus row={6} labels={[{ x: 2, text: '0011101011001001' }]} />
            <rect x="1" y={at(7, 1)} width="100%" height="16" fill={PALE} />
            <rect x="1" y={at(7, 9)} width="100%" height="1" fill="#000" />
            <Bus
                row={8}
                edges={[MARKS[0].x]}
                labels={[{ x: 2, text: '00001111' }, { x: MARKS[0].x + 2, text: '00000101' }]}
            />

            <path d={serOut} fill="none" stroke={GREEN} />
            <rect x="1" y={at(10, 2)} width="100%" height="1" fill={GREEN} />
            <rect x={MARKS[0].x - 1} y={at(10, 2)} width="2" height="15" fill={GREEN} />

            <rect x="1" y={at(11, 16)} width="100%" height="1" fill={GREEN} />
            {BIT_EDGES.map((x, i) => (
                <rect key={x} x={i < 2 ? x : x - 1} y={at(11, 3)} width={i < 2 ? 1 : 2} height="14" fill={GREEN} />
            ))}

            <Bus row={12} edges={CE16} />
            <Bus
                row={13}
                edges={BIT_EDGES}
                labels={['7', '8', '9', '0', '1', '2', '3', '4'].map((text, i) => ({
                    x: i === 0 ? 2 : BIT_EDGES[i - 1] + 2,
                    text,
                }))}
            />
            <Bus
                row={14}
                edges={BIT_EDGES}
                labels={[
                    '11...',
                    '111111110',
                    '111111111',
                    '000011110',
                    '100001111',
                    '110000111',
                    '111000011',
                    '111100001',
                ].map((text, i) => ({ x: i === 0 ? 2 : BIT_EDGES[i - 1] + 2, text }))}
            />

            {MARKS.map((m, i) => (
                <rect
                    key={m.x}
                    x={i === 2 ? m.x - 1 : m.x}
                    y="1"
                    width={i === 2 ? 3 : 1}
                    height="100%"
                    fill={GOLD}
                    className="mix-blend-difference"
                />
            ))}
        </svg>
    );
}

function HeaderMarks() {
    return (
        <svg className="block h-full w-full" shapeRendering="crispEdges" aria-hidden="true">
            {MARKS.map((m, i) => (
                <rect
                    key={m.x}
                    x={i === 2 ? m.x - 1 : m.x}
                    y="1"
                    width={i === 2 ? 3 : 1}
                    height="18"
                    fill={GOLD}
                />
            ))}
        </svg>
    );
}

function Span({ x1, x2, y, text }: { x1: number; x2: number; y: number; text: string }) {
    const mid = (x1 + x2) / 2;
    const half = text.length > 10 ? 44 : 23;
    return (
        <g>
            <rect x={x1} y={y + 10} width={mid - half - x1} height="1" fill="#fff" />
            <rect x={mid + half} y={y + 10} width={x2 - mid - half} height="1" fill="#fff" />
            <text x={mid} y={y + 17} textAnchor="middle" fill="#fff">
                {text}
            </text>
        </g>
    );
}

function CursorTimeline() {
    const ticks = Array.from({ length: 128 }, (_, i) => i - 4);
    const labels = ['4999750000', '4999760000', '4999770000', '4999780000', '4999790000', '4999800000', '4999810000'];

    return (
        <svg className="isolate block h-full w-full" shapeRendering="crispEdges" role="img" aria-label="Cursor timeline">
            <rect width="100%" height="100%" fill="#000" />
            {ticks.map((i) => (
                <rect
                    key={i}
                    x={toX(i * 500)}
                    y={i % 10 === 0 ? 0 : 3}
                    width="1"
                    height={i % 10 === 0 ? 7 : 4}
                    fill={GREEN}
                />
            ))}
            {labels.map((l, i) => (
                <text key={l} x={toX(i * 10000)} y="23" textAnchor="middle" fill={GREEN}>
                    {l} ps
                </text>
            ))}
            {CURSORS.map((c, i) => (
                <rect key={c.name} y={25 + i * 20} width="100%" height="1" fill="#808080" />
            ))}
            <Span x1={0} x2={MARKS[0].x} y={25} text="4999766423 ps" />
            {MARKS.map((m, i) => {
                const y = 45 + i * 20;
                const left = i === 5 ? 1202 : m.x - 45;
                return (
                    <g key={m.x}>
                        <rect
                            x={i === 2 ? m.x - 1 : m.x}
                            width={i === 2 ? 3 : 1}
                            height={y}
                            fill={GOLD}
                            className={i === 2 ? '' : 'mix-blend-difference'}
                        />
                        <rect x={left + 0.5} y={y + 1.5} width="91" height="18" fill="#000" stroke={GOLD} />
                        <text x={left + 46} y={y + 17} textAnchor="middle" fill={GOLD}>
                            {m.label}
                        </text>
                        {m.next && <Span x1={left + 92} x2={MARKS[i + 1].x} y={y} text={m.next} />}
                    </g>
                );
            })}
        </svg>
    );
}

function WaveColumn() {
    return (
        <section className="flex min-w-0 flex-1 flex-col border-r border-l-2 border-r-[#696969] border-l-white">
            <HeaderCell black>
                <HeaderMarks />
            </HeaderCell>
            <div className="h-0.5 shrink-0 bg-white" />
            <div className="min-h-0 flex-1">
                <Waveforms />
            </div>
            <PaneDivider />
            <div className="h-[265px] shrink-0">
                <CursorTimeline />
            </div>
            <PaneDivider />
            <div className="flex h-[23px] shrink-0 border-b border-white bg-[#808080] px-0.5 pt-[3px] pb-[3px]">
                <div className="flex flex-1 border-t border-b border-t-[#696969] border-b-white bg-[#c8c8c8]">
                    <button
                        type="button"
                        aria-label="Scroll left"
                        className="mr-0.5 flex w-3.5 items-center justify-center border-r-2 border-b border-gray-400 bg-[#f0f0f0]"
                    >
                        <svg viewBox="0 0 4 8" className="h-2 w-1"><path d="M4 0v8L0 4z" /></svg>
                    </button>
                    <div className="w-px bg-[#ffd700]" />
                    <div className="flex-1" />
                    <div className="w-2 bg-[#f0f0f0]" />
                    <button
                        type="button"
                        aria-label="Scroll right"
                        className="flex w-3.5 items-center justify-center border-r-2 border-b border-l border-gray-400 bg-[#f0f0f0]"
                    >
                        <svg viewBox="0 0 4 8" className="h-2 w-1"><path d="M0 0v8l4-4z" /></svg>
                    </button>
                </div>
            </div>
        </section>
    );
}

function ScrollColumn() {
    return (
        <section className="flex w-[19px] shrink-0 flex-col border-l-2 border-white">
            <HeaderCell />
            <div className="h-0.5 shrink-0 bg-white" />
            <div className="flex min-h-0 flex-1 flex-col border-t border-r-2 border-l border-t-[#696969] border-r-gray-400 border-l-[#696969] bg-[#f0f0f0] p-px">
                <ScrollButton dir="up" />
                <div className="h-[210px]" />
                <div className="h-[19px] bg-white" />
                <div className="flex-1" />
                <ScrollButton dir="down" />
            </div>
            <PaneDivider />
            <div className="h-[265px] shrink-0 bg-[#808080]" />
            <PaneDivider />
            <div className="h-[23px] shrink-0 border-b border-white bg-[#808080]" />
        </section>
    );
}

/* ---------- window chrome ---------- */

function TitleBar() {
    return (
        <header className="bg-white font-['Noto_Sans','Open_Sans',sans-serif] text-[15px] leading-5 text-black">
            <div className="flex h-7 items-center pl-[3px]">
                <span className="mr-1.5 size-[18px]">
                    <WaveLogo />
                </span>
                <h1 className="flex-1">Wave</h1>
                <button type="button" aria-label="Minimize" className="flex w-14 justify-center">
                    <svg viewBox="0 0 11 11" className="size-[11px]"><path d="M0 5.500h11" stroke="#000" /></svg>
                </button>
                <button type="button" aria-label="Restore" className="flex w-14 justify-center">
                    <svg viewBox="0 0 11 11" className="size-[11px]" shapeRendering="crispEdges">
                        <path d="M.5 2.500h8v8h-8zM2.500 2.500v-2h8v8h-2" fill="none" stroke="#000" />
                    </svg>
                </button>
                <button type="button" aria-label="Close" className="flex w-15 justify-center">
                    <svg viewBox="0 0 11 11" className="size-[11px]"><path d="M.5 .5l10 10M10.500 .5l-10 10" stroke="#000" /></svg>
                </button>
            </div>
            <nav className="flex h-[25px] items-start gap-4 pt-px pl-2">
                {['File', 'Edit', 'View', 'Add', 'Format', 'Tools', 'Bookmarks', 'Window', 'Help'].map((item) => (
                    <button key={item} type="button">
                        {item}
                    </button>
                ))}
            </nav>
        </header>
    );
}

function GripLines() {
    return (
        <div className="flex flex-1 flex-col gap-[3px]">
            <div className="h-0.5 border-t border-b border-t-[#c4f4f8] border-b-black" />
            <div className="h-0.5 border-t border-b border-t-[#c4f4f8] border-b-black" />
        </div>
    );
}

function DockBar() {
    const box = 'flex size-[11px] items-center justify-center border-r border-b border-gray-600 bg-[#f0f0f0]';
    return (
        <div className="flex h-[18px] items-center bg-[#99b4d1] pr-[3px] pl-0.5">
            <span className="size-3.5">
                <WaveLogo />
            </span>
            <h2 className="mr-1.5 ml-1 text-[13px]">Wave - Default</h2>
            <GripLines />
            <div className="h-2 w-5 bg-[radial-gradient(#000_25%,transparent_30%)] bg-[size:3px_3px]" />
            <GripLines />
            <div className="ml-1 flex gap-[3px]">
                <button type="button" aria-label="Move" className={box}>
                    <svg viewBox="0 0 9 9" className="size-[9px]"><path d="M4.500 0v9M0 4.500h9M2 2l5 5M7 2L2 7" stroke="#333" strokeDasharray="1 1" /></svg>
                </button>
                <button type="button" aria-label="Undock" className={box}>
                    <svg viewBox="0 0 9 9" className="size-[9px]"><path d="M4 2H1v6h6V5M8.500 .5L3.500 5.500M3.500 2.500v3h3" fill="none" stroke="#000" strokeWidth="1.500" /></svg>
                </button>
                <button type="button" aria-label="Close pane" className={box}>
                    <svg viewBox="0 0 9 9" className="size-[9px]"><path d="M1 1l7 7M8 1L1 8" stroke="#000" strokeWidth="1.500" /></svg>
                </button>
            </div>
        </div>
    );
}

function StatusBar() {
    return (
        <footer className="flex h-6 shrink-0 border-b border-[#a0a0a0] bg-[#f0f0f0] px-0.5 pb-0.5">
            <div className="flex w-[196px] items-center overflow-hidden border-t border-r border-l border-[#696969] pr-1 pl-1">
                <span className="overflow-hidden whitespace-nowrap text-black">4999747917 ps to 4999810930 ps</span>
            </div>
            <div className="ml-0.5 flex-1 border-t border-l border-[#696969]" />
            <svg viewBox="0 0 14 14" className="ml-0.5 size-3.5 self-end" aria-hidden="true">
                <path d="M3 14L14 3M7 14l7-7M11 14l3-3" stroke="#808080" />
            </svg>
        </footer>
    );
}

/* ---------- desktop taskbar ---------- */

interface AppIcon {
    label: string;
    running?: boolean;
    active?: boolean;
    icon: ReactNode;
}

const APPS: AppIcon[] = [
    {
        label: 'Edge',
        running: true,
        icon: (
            <path
                d="M2 13Q4 2 15 2q11 0 11 12v2H10q1 6 8 6 4 0 7-2v5q-4 2-9 2-11-1-11-11 0-4 5-7-6 0-8 6zm8-1h9q0-5-4.500-5T10 12z"
                fill="#0078d7"
            />
        ),
    },
    {
        label: 'File Explorer',
        running: true,
        icon: (
            <>
                <path d="M1 4h9l2 3H1z" fill="#e8a020" />
                <path d="M1 7h27v17H1z" fill="#fcd462" />
                <path d="M6 16h16v9h-4v-5h-8v5H6z" fill="#3090e0" />
            </>
        ),
    },
    {
        label: 'Lantern',
        icon: (
            <>
                <circle cx="14" cy="14" r="14" fill="#4f8df5" />
                <path d="M12 7v11h7" fill="none" stroke="#fff" strokeWidth="3.500" />
            </>
        ),
    },
    {
        label: 'Excel',
        running: true,
        icon: (
            <>
                <path d="M14 5h13v18H14z" fill="#fff" stroke="#1f7244" />
                <path d="M18 8h7M18 11h7M18 14h7M18 17h7M18 20h7" stroke="#1f7244" strokeWidth="1.500" />
                <path d="M1 4l15-3v26L1 24z" fill="#1f7244" />
                <path d="M5 9l7 10M12 9L5 19" stroke="#fff" strokeWidth="2" />
            </>
        ),
    },
    {
        label: 'Browser',
        running: true,
        icon: (
            <>
                <circle cx="14" cy="14" r="13" fill="#5aaeee" />
                <path d="M2 7q5 0 9 4 6 5 8 15-7 0-10-6Q4 16 2 7z" fill="#fff" />
                <path d="M5 4q12-4 19 8l-6 3Q13 6 5 4z" fill="#3a94d8" />
                <path d="M3 14q3 9 11 13-10 0-11-13z" fill="#1a6cb0" />
                <path d="M18 16l7-3 4 5-2 8-8 1-3-5z" fill="#145c94" />
            </>
        ),
    },
    {
        label: 'Music',
        running: true,
        icon: (
            <>
                <rect width="28" height="28" rx="6" fill="#dd1020" />
                <path
                    d="M19 5q-5-1-4 3l2 8q0 3-3 3t-3-4q1-4 5-4 6 0 6 6 0 7-8 7-8-1-8-8 0-6 6-8"
                    fill="none"
                    stroke="#fff"
                    strokeWidth="2"
                    strokeLinecap="round"
                />
            </>
        ),
    },
    {
        label: 'ModelSim',
        running: true,
        active: true,
        icon: (
            <>
                <rect x="0" y="0" width="28" height="5" fill="#0000ff" stroke="#fff" />
                <path
                    d="M2 9h8l4 9 4-9h8v4h-2v11h2v4h-9v-4h2v-7l-4 8h-2l-4-8v7h2v4H2v-4h2V13H2z"
                    fill="#000"
                    stroke="#d8d8d8"
                    strokeWidth="1.200"
                />
            </>
        ),
    },
    {
        label: 'Chrome',
        running: true,
        icon: (
            <>
                <circle cx="14" cy="14" r="13.500" fill="#fcc934" />
                <path d="M14 14L2.300 7.200A13.500 13.500 0 0 1 25.700 7.200z" fill="#dd5144" />
                <path d="M2.300 7.200A13.500 13.500 0 0 0 13 27.500L18 17l-8.500-2z" fill="#1da05c" />
                <path d="M14 8h12a13 13 0 0 0-.5-1H14z" fill="#dd5144" />
                <circle cx="14" cy="14" r="6.300" fill="#f1f1f1" />
                <circle cx="14" cy="14" r="4.800" fill="#4a88f4" />
            </>
        ),
    },
];

function Taskbar() {
    return (
        <div className="flex h-[50px] shrink-0 bg-linear-to-r from-[#363a39] via-[#262222] via-28% to-[#464646] to-40% font-['Noto_Sans','Noto_Sans_CJK_SC',sans-serif] text-white">
            <button type="button" aria-label="Start" className="flex w-15 items-center justify-center">
                <svg viewBox="0 0 16 16" className="size-4">
                    <path d="M0 2.300L6.500 1.400V7.600H0zM7.300 1.300L16 0v7.600H7.300zM0 8.400h6.500v6.200L0 13.700zM7.300 8.400H16V16l-8.700-1.200z" fill="#fff" />
                </svg>
            </button>
            <button type="button" aria-label="Search Windows" className="flex w-15 items-center justify-center">
                <svg viewBox="0 0 20 20" className="size-5">
                    <circle cx="12.500" cy="7.500" r="6.500" fill="none" stroke="#fff" strokeWidth="1.500" />
                    <path d="M8 12l-7 7.500" stroke="#fff" strokeWidth="1.500" />
                </svg>
            </button>
            <button type="button" aria-label="Task view" className="flex w-15 items-center justify-center">
                <svg viewBox="0 0 20 20" className="size-5" fill="none" stroke="#fff">
                    <path d="M.5 0v3.500h13V0M.5 6.500h13v8H.5zM.5 20v-3.500h13V20M18.500 0v20" />
                    <path d="M17 7h3v2h-3z" fill="#fff" />
                </svg>
            </button>
            <span className="mr-3 ml-[7px] my-3 w-[3px] border-r border-l border-gray-500" />
            <span className="w-1.5" />
            {APPS.map((app) => (
                <button
                    key={app.label}
                    type="button"
                    aria-label={app.label}
                    className={clsx(
                        'mr-2.5 flex w-[50px] flex-col items-center justify-between pt-[11px]',
                        app.active && 'bg-[#353434]'
                    )}
                >
                    <svg viewBox="0 0 28 28" className="size-7 overflow-visible">{app.icon}</svg>
                    <span className={clsx('h-0.5 w-full', app.running && 'bg-[#b0aaa6]')} />
                </button>
            ))}
            <div className="flex-1" />
            <div className="flex items-center">
                <svg viewBox="0 0 14 24" className="h-6 w-3.5">
                    <path d="M3.500 1v6M9.500 1v6" stroke="#fff" strokeWidth="2" />
                    <path d="M1 6h11v5q-1 4-4 5v6H5v-6q-3-1-4-5z" fill="#fff" />
                </svg>
                <div className="ml-px flex h-[22px] w-10 items-center justify-center border-2 border-white bg-[#1f9a48] text-[13px] leading-4 outline-1 -outline-offset-3 outline-[#222]">
                    100%
                </div>
                <span className="h-3 w-[3px] bg-white" />
                <button type="button" aria-label="Show hidden icons" className="ml-2.5">
                    <svg viewBox="0 0 12 7" className="h-[7px] w-3"><path d="M.5 6.500L6 1l5.500 5.500" fill="none" stroke="#fff" strokeWidth="1.300" /></svg>
                </button>
                <svg viewBox="0 0 20 14" className="ml-3.5 h-3.5 w-5">
                    <path d="M4.500 3.500h13v9h-13z" fill="none" stroke="#fff" />
                    <path d="M6 5h10v6H6zM18 6h2v4h-2z" fill="#fff" />
                    <path d="M0 0h6v5H4v4H2V5H0z" fill="#464646" />
                    <path d="M1.500 0v2M4.500 0v2M.5 2.500h5v2h-5zM3 5v4" stroke="#fff" fill="none" />
                </svg>
                <svg viewBox="0 0 16 16" className="ml-4 size-4" fill="none" stroke="#ddd" strokeWidth="1.200">
                    <path d="M1 15Q1 2 15 1M4 15Q4 6 15 5M7.500 15Q8 9 15 8.500M11 15q0-3 4-3.500" />
                    <path d="M13 13h2v2h-2z" fill="#fff" />
                </svg>
                <svg viewBox="0 0 20 16" className="ml-2.5 h-4 w-5" fill="none" stroke="#fff">
                    <path d="M.5 5.500h3l4-4v13l-4-4h-3zM10 6q1.500 2 0 4M13 4q3 4 0 8" />
                    <path d="M16 2q4 6 0 12" stroke="#888" />
                </svg>
                <button type="button" className="ml-2 w-5 text-xl leading-6">
                    英
                </button>
                <div className="ml-1 w-[90px] text-center text-[15px] leading-[23px]">
                    <div>22:22</div>
                    <div>2020/8/14</div>
                </div>
                <button type="button" aria-label="Notifications" className="ml-[17px]">
                    <svg viewBox="0 0 20 20" className="size-5"><path d="M.5 1.500h19v14h-7L10 18.500l-2.500-3h-7z" fill="none" stroke="#fff" /></svg>
                </button>
            </div>
            <span className="mr-1.5 ml-[25px] w-px bg-gray-500" />
        </div>
    );
}

export default function App() {
    return (
        <div className="relative flex h-screen min-h-[760px] flex-col overflow-hidden bg-[#f0f0f0] font-['DejaVu_Sans_Condensed','Noto_Sans',sans-serif] text-xs leading-4 text-black">
            <TitleBar />
            <div className="flex min-h-0 flex-1 flex-col border-t border-r-2 border-l border-[#a0a0a0]">
                <div className="flex min-h-0 flex-1 flex-col border-t border-l border-white">
                    <DockBar />
                    <Toolbars />
                    <main className="mt-[3px] flex min-h-0 flex-1 pr-0.5 pl-0.5">
                        <NamesColumn />
                        <ValuesColumn />
                        <WaveColumn />
                        <ScrollColumn />
                    </main>
                    <div className="h-[3px] shrink-0" />
                    <StatusBar />
                </div>
            </div>
            <Taskbar />
            <p className="absolute bottom-[52px] left-[901px] font-['Noto_Sans_CJK_SC',sans-serif] text-[25px] leading-7 text-[#e8e6f2] [paint-order:stroke_fill] [-webkit-text-stroke:3px_#555]">
                就算天快亮
            </p>
        </div>
    );
}
